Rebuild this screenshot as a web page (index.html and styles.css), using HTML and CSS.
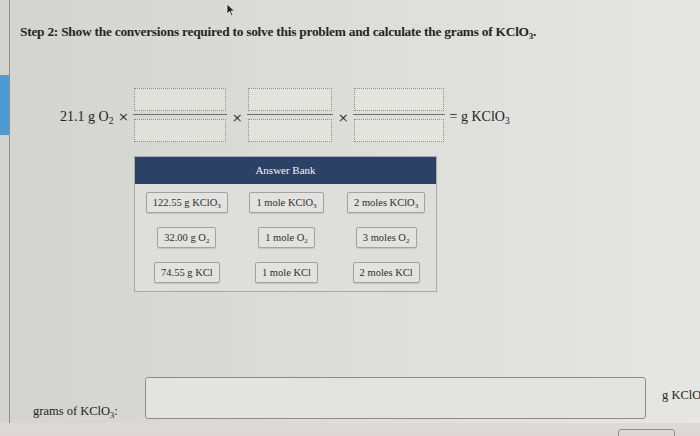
FILE: index.html
```html
<!DOCTYPE html>
<html>
<head>
<meta charset="utf-8">
<link rel="stylesheet" href="styles.css">
</head>
<body>
<div class="page">
  <div class="rail"><div class="tab"></div></div>
  <div class="content">
    <h1 class="title">Step 2: Show the conversions required to solve this problem and calculate the grams of KClO<sub>3</sub>.</h1>

    <div class="equation">
      <span class="given">21.1 g O<sub>2</sub> <span class="times">×</span></span>
      <div class="fraction f1"><div class="slot"></div><div class="bar"></div><div class="slot"></div></div>
      <span class="times">×</span>
      <div class="fraction f2"><div class="slot"></div><div class="bar"></div><div class="slot"></div></div>
      <span class="times">×</span>
      <div class="fraction f3"><div class="slot"></div><div class="bar"></div><div class="slot"></div></div>
      <span class="result">= g KClO<sub>3</sub></span>
    </div>

    <div class="bank">
      <div class="bank-head">Answer Bank</div>
      <div class="bank-body">
        <div class="chip">122.55 g KClO<sub>3</sub></div>
        <div class="chip">1 mole KClO<sub>3</sub></div>
        <div class="chip">2 moles KClO<sub>3</sub></div>
        <div class="chip">32.00 g O<sub>2</sub></div>
        <div class="chip">1 mole O<sub>2</sub></div>
        <div class="chip">3 moles O<sub>2</sub></div>
        <div class="chip">74.55 g KCl</div>
        <div class="chip">1 mole KCl</div>
        <div class="chip">2 moles KCl</div>
      </div>
    </div>

    <div class="answer-row">
      <span class="answer-label">grams of KClO<sub>3</sub>:</span>
      <div class="answer-input"></div>
      <span class="answer-unit">g KClO<sub>3</sub></span>
    </div>
    <div class="footer">
      <div class="footer-btn"></div>
    </div>
  </div>
  <svg class="cursor" width="10" height="14" viewBox="0 0 10 14"><path d="M1 1 L1 11 L3.5 8.5 L5.5 13 L7 12.3 L5 8 L8.5 8 Z" fill="#222" stroke="#eee" stroke-width="0.8"/></svg>
</div>
</body>
</html>
```

FILE: styles.css
```css
html, body {
  margin: 0;
  padding: 0;
}
body {
  width: 700px;
  height: 436px;
  overflow: hidden;
  font-family: "Liberation Serif", "Times New Roman", serif;
  color: #232323;
}
.page {
  position: relative;
  width: 700px;
  height: 436px;
  display: flex;
  background: linear-gradient(90deg, #d3d3cf 0%, #dadad6 35%, #e0e0dc 70%, #e6e6e2 100%);
  overflow: hidden;
}
.rail {
  width: 9px;
  flex: none;
}
.tab {
  margin-top: 75px;
  height: 60px;
  background: #4d9ad6;
}
.content {
  flex: 1;
  min-width: 0;
  border-left: 1px solid #8f8f8c;
  padding-left: 10px;
  display: flex;
  flex-direction: column;
}
.title {
  margin: 24px 0 0 0;
  font-size: 13.4px;
  line-height: 16px;
  font-weight: bold;
  letter-spacing: -0.25px;
  color: #262626;
}
sub {
  font-size: 68%;
  line-height: 0;
  vertical-align: -0.3em;
}
.equation {
  margin: 48px 0 0 40px;
  display: flex;
  align-items: center;
  font-size: 14px;
}
.given {
  margin-top: 4px;
  margin-right: 4px;
}
.times {
  font-family: "DejaVu Sans", sans-serif;
  font-size: 13px;
  color: #333;
  margin: 4px 4px 0 5px;
}
.given .times {
  margin: 0 0 0 1px;
}
.fraction {
  display: flex;
  flex-direction: column;
}
.f1 { width: 94px; }
.f2 { width: 86px; }
.f3 { width: 92px; }
.slot {
  height: 21px;
  margin: 0 1px;
  border: 1px dotted #8d8d8a;
  background: rgba(240, 240, 236, 0.35);
}
.bar {
  height: 1px;
  margin: 3px 0 4px 0;
  background: #6e6e6c;
}
.result {
  margin: 4px 0 0 5px;
}
.bank {
  margin: 14px 0 0 114px;
  width: 301px;
  border: 1px solid #a9a9a6;
  background: #dededa;
}
.bank-head {
  height: 27px;
  background: #2b4266;
  color: #f2f2f2;
  font-size: 11px;
  line-height: 27px;
  text-align: center;
}
.bank-body {
  display: grid;
  grid-template-columns: repeat(3, 1fr);
  row-gap: 14px;
  padding: 8px 0 8px 2px;
  justify-items: center;
}
.chip {
  height: 19px;
  line-height: 19px;
  padding: 0 6px;
  border: 1px solid #a2a2a0;
  border-radius: 2px;
  background: #e2e2df;
  box-shadow: 0 1px 1px rgba(0, 0, 0, 0.12);
  font-size: 10.5px;
  color: #2f2f2f;
  white-space: nowrap;
}
.answer-row {
  margin-top: 85px;
  display: flex;
  align-items: center;
  margin-left: 13px;
}
.answer-label {
  font-size: 12.5px;
  margin-top: 26px;
  width: 112px;
  flex: none;
}
.answer-input {
  width: 499px;
  height: 40px;
  flex: none;
  border: 1px solid #8c8c8a;
  border-radius: 3px;
  background: #e3e3df;
}
.answer-unit {
  font-size: 12.5px;
  margin-left: 16px;
  margin-top: -6px;
  white-space: nowrap;
}
.footer {
  flex: 1;
  margin: 4px 0 0 -20px;
  background: linear-gradient(180deg, #dcdad7 0%, #ddd4d3 100%);
  display: flex;
  justify-content: flex-end;
  padding-right: 25px;
}
.footer-btn {
  margin-top: 6px;
  width: 55px;
  height: 20px;
  border: 1px solid #8f8f8c;
  border-radius: 3px;
}
.cursor {
  position: absolute;
  left: 226px;
  top: 3px;
}
```
